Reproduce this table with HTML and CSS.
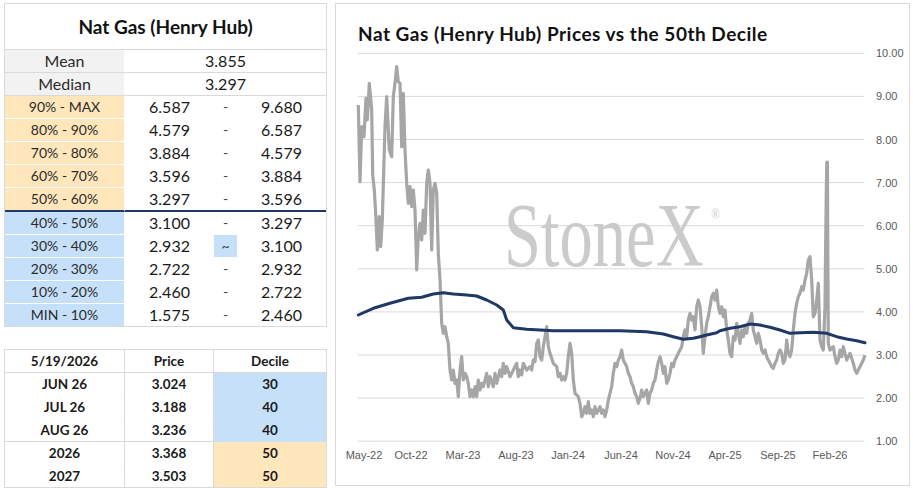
FILE: index.html
```html
<!DOCTYPE html>
<html>
<head>
<meta charset="utf-8">
<link rel="stylesheet" href="styles.css">
</head>
<body>
<div class="page">
  <div class="left">
    <table class="stats">
      <colgroup><col class="c-lab"><col class="c-lo"><col class="c-dash"><col class="c-hi"></colgroup>
      <tr><td class="title" colspan="4">Nat Gas (Henry Hub)</td></tr>
      <tr class="sum"><td class="lab gray">Mean</td><td colspan="3">3.855</td></tr>
      <tr class="sum"><td class="lab gray">Median</td><td colspan="3">3.297</td></tr>
      <tr><td class="lab org">90% - MAX</td><td>6.587</td><td class="dash">-</td><td>9.680</td></tr>
      <tr><td class="lab org">80% - 90%</td><td>4.579</td><td class="dash">-</td><td>6.587</td></tr>
      <tr><td class="lab org">70% - 80%</td><td>3.884</td><td class="dash">-</td><td>4.579</td></tr>
      <tr><td class="lab org">60% - 70%</td><td>3.596</td><td class="dash">-</td><td>3.884</td></tr>
      <tr class="mid"><td class="lab org">50% - 60%</td><td>3.297</td><td class="dash">-</td><td>3.596</td></tr>
      <tr><td class="lab blu">40% - 50%</td><td>3.100</td><td class="dash">-</td><td>3.297</td></tr>
      <tr><td class="lab blu">30% - 40%</td><td>2.932</td><td class="dash cur">~</td><td>3.100</td></tr>
      <tr><td class="lab blu">20% - 30%</td><td>2.722</td><td class="dash">-</td><td>2.932</td></tr>
      <tr><td class="lab blu">10% - 20%</td><td>2.460</td><td class="dash">-</td><td>2.722</td></tr>
      <tr class="last"><td class="lab blu">MIN - 10%</td><td>1.575</td><td class="dash">-</td><td>2.460</td></tr>
    </table>

    <table class="fut">
      <colgroup><col class="f1"><col class="f2"><col class="f3"></colgroup>
      <tr class="head"><td>5/19/2026</td><td>Price</td><td>Decile</td></tr>
      <tr><td>JUN 26</td><td>3.024</td><td class="d blu">30</td></tr>
      <tr><td>JUL 26</td><td>3.188</td><td class="d blu">40</td></tr>
      <tr class="sep"><td>AUG 26</td><td>3.236</td><td class="d blu">40</td></tr>
      <tr><td>2026</td><td>3.368</td><td class="d org">50</td></tr>
      <tr><td>2027</td><td>3.503</td><td class="d org">50</td></tr>
    </table>
  </div>

  <div class="chart">
    <div class="chart-title">Nat Gas (Henry Hub) Prices vs the 50th Decile</div>
    <svg class="plot" width="573" height="440" viewBox="0 0 573 440">
      <g transform="translate(-336,-44)">
        <g class="grid">
          <line x1="358" x2="864" y1="53.3" y2="53.3"/>
          <line x1="358" x2="864" y1="96.4" y2="96.4"/>
          <line x1="358" x2="864" y1="139.5" y2="139.5"/>
          <line x1="358" x2="864" y1="182.6" y2="182.6"/>
          <line x1="358" x2="864" y1="225.7" y2="225.7"/>
          <line x1="358" x2="864" y1="268.8" y2="268.8"/>
          <line x1="358" x2="864" y1="311.9" y2="311.9"/>
          <line x1="358" x2="864" y1="355" y2="355"/>
          <line x1="358" x2="864" y1="398.1" y2="398.1"/>
          <line x1="358" x2="864" y1="441.2" y2="441.2"/>
        </g>
        <g class="ylab">
          <text x="876" y="57.3">10.00</text>
          <text x="876" y="100.4">9.00</text>
          <text x="876" y="143.5">8.00</text>
          <text x="876" y="186.6">7.00</text>
          <text x="876" y="229.7">6.00</text>
          <text x="876" y="272.8">5.00</text>
          <text x="876" y="315.9">4.00</text>
          <text x="876" y="359">3.00</text>
          <text x="876" y="402.1">2.00</text>
          <text x="876" y="445.2">1.00</text>
        </g>
        <g class="xlab">
          <text x="364" y="459">May-22</text>
          <text x="411" y="459">Oct-22</text>
          <text x="463" y="459">Mar-23</text>
          <text x="516" y="459">Aug-23</text>
          <text x="568" y="459">Jan-24</text>
          <text x="621" y="459">Jun-24</text>
          <text x="673" y="459">Nov-24</text>
          <text x="725" y="459">Apr-25</text>
          <text x="778" y="459">Sep-25</text>
          <text x="830" y="459">Feb-26</text>
        </g>
        <text class="mark" transform="translate(504,266) scale(0.74,1)">StoneX<tspan class="reg" dx="10" dy="-47">®</tspan></text>
        <polyline class="price" points="358.3,105 360,181.7 361.7,126.7 364,136.7 366,98.3 367.3,120 369.3,83.3 371.7,110 372.7,175 374.3,190 375.7,213.3 377.3,250 379.3,216.7 380.7,246.7 382.3,220 385,126.7 386.7,96.7 389.3,150 391.7,156.7 393.3,96.7 395,83.3 396.7,66.7 398.3,81.7 400,83.3 401.7,146.7 403.3,93.3 405,150 406.7,183.3 408.3,203.3 410,186.7 411.7,206.7 413.3,190 415,210 416.7,270 418.3,236.7 420,223.3 421.7,240 423.3,210 425,233.3 426.7,183.3 428.3,170 430,183.3 431.7,250 433.3,190 435,183.3 436.7,193.3 438.3,253.3 440,280 441.7,323.3 443.3,333.3 445,326.7 446.7,336.7 448.3,343.3 450,370 451.7,380 453.3,370 455,383.3 456.7,380 458.3,396.7 460,370 461.7,356.7 463.3,380 465,373.3 466.7,376.7 468.3,383.3 470,396.7 471.7,390 473.3,396.7 475,386.7 476.7,396.7 478.3,380 480,390 481.7,383.3 483.3,386.7 486.7,373.3 488.3,386.7 490,376.7 493.3,386.7 495,373.3 496.7,383.3 500,370 501.7,376.7 503.3,363.3 505,373.3 506.7,366.7 510,376.7 513.3,370 516.7,363.3 518.3,376.7 520,370 521.7,375 523.3,363.3 526.7,370 530,366.7 531.7,370 533.3,360 535,361.7 536.7,343.3 538.3,340 540,356.7 541.7,360 543.3,346.7 545,336.7 546.7,326.7 548.3,346.7 550,353.3 553.3,363.3 556.7,366.7 558.3,376.7 560,373.3 561.7,380 563.3,376.7 565,380 566.7,373.3 568.3,356.7 570,343.3 571.7,353.3 573.3,380 575,393.3 578.3,396.7 580,403.3 581.7,416.7 583.3,413.3 585,406.7 586.7,413.3 588.3,401.7 590,413.3 591.7,410 593.3,416.7 595,406.7 596.7,413.3 600,406.7 601.7,413.3 603.3,410 605,416.7 606.7,410 608.3,400 610,393.3 611.7,386.7 613.3,373.3 615,363.3 616.7,366.7 618.3,360 620,356.7 621.7,350 623.3,360 625,363.3 626.7,366.7 628.3,373.3 630,376.7 631.7,383.3 633.3,386.7 635,393.3 636.7,396.7 638.3,403.3 640,398.3 641.7,390 643.3,396.7 645,393.3 646.7,390 648.3,403.3 650,393.3 651.7,390 653.3,383.3 655,380 656.7,370 658.3,361.7 660,356.7 661.7,363.3 663.3,373.3 665,366.7 666.7,383.3 668.3,380 670,373.3 671.7,363.3 673.3,366.7 675,360 676.7,356.7 678.3,353.3 680,350 681.7,346.7 683.3,336.7 685,330 686.7,336.7 688.3,320 690,313.3 691.7,320 693.3,316.7 695,330 696.7,306.7 698.3,300 700,306.7 701.7,326.7 703.3,353.3 705,336.7 706.7,323.3 708.3,316.7 710,306.7 711.7,296.7 713.3,293.3 715,300 716.7,290 718.3,306.7 720,313.3 721.7,306.7 723.3,316.7 725,310 726.7,330 728.3,340 730,353.3 731.7,356.7 733.3,336.7 735,340 736.7,323.3 738.3,333.3 740,343.3 741.7,330 743.3,336.7 745,326.7 746.7,333.3 748.3,323.3 750,320 751.7,313.3 753.3,330 755,336.7 756.7,343.3 758.3,333.3 760,340 761.7,350 763.3,353.3 765,350 766.7,356.7 768.3,360 770,363.3 771.7,366.7 773.3,368.3 775,363.3 776.7,360 778.3,353.3 780,350 781.7,353.3 783.3,363.3 785,360 786.7,340 788.3,353.3 790,356.7 791.7,350 793.3,330 795,313.3 796.7,303.3 798.3,296.7 800,293.3 801.7,286.7 803.3,290 805,280 806.7,273.3 808.3,260 810,256.7 811.7,280 813.3,316.7 815,313.3 816.7,300 818.3,283.3 820,340 821.7,346.7 823.3,350 825,306.7 825.6,250 826.2,200 826.8,162 827.4,162 827.8,250 828.3,343.3 830,350 833.3,346.7 835,356.7 836.7,363.3 838.3,360 840,350 841.7,356.7 843.3,346.7 846.7,360 850,353.3 853.3,363.3 855,370 856.7,373.3 858.3,370 860,366.7 861.7,363.3 863.3,360 865,355"/>
        <polyline class="median" points="358.3,315 373.3,308.3 390,303.3 408.3,298.3 421.7,297.3 433.3,294 443.3,292.7 453.3,294 466.7,295 476.7,296 486.7,300 496.7,305 503.3,310 506.7,320 513.3,327.7 526.7,329.3 540,330 553.3,330.7 586.7,330.7 620,330.7 646.7,331.7 663.3,334 673.3,336.7 683.3,339.3 693.3,338.3 700,336.7 706.7,335 716.7,332.7 720,330.7 730,328.3 740,326.7 750,324 760,325 770,327.3 780,330 790,333.3 800,332.7 813.3,332.3 826.7,333.3 836.7,336.7 846.7,339 856.7,340.7 865,342.7"/>
      </g>
    </svg>
  </div>
</div>
</body>
</html>
```
FILE: styles.css
```css
html, body {
  margin: 0;
  padding: 0;
  background: #ffffff;
}

body {
  width: 913px;
  height: 488px;
  overflow: hidden;
  font-family: "Lato", "Liberation Sans", sans-serif;
  color: #1a1a1a;
}

.page {
  display: flex;
  gap: 8px;
  padding: 3px 0 0 4px;
}

.left {
  width: 323px;
  display: flex;
  flex-direction: column;
  gap: 22px;
}

/* ---------- decile stats table ---------- */
.stats {
  width: 323px;
  table-layout: fixed;
  border-collapse: separate;
  border-spacing: 0;
  border: 1px solid #d9d9d9;
}

.c-lab { width: 120px; }
.c-lo { width: 89px; }
.c-dash { width: 23px; }
.c-hi { width: 89px; }

.stats td {
  height: 22px;
  padding: 0;
  text-align: center;
  font-size: 16px;
  line-height: 22px;
  color: #1a1a1a;
  border-bottom: 1px solid #ffffff;
}

.stats td.title {
  height: 45px;
  font-size: 19px;
  font-weight: 700;
  color: #111;
  border-bottom: 1px solid #d9d9d9;
}

.stats .lab {
  font-size: 14px;
  color: #2b2b2b;
  border-right: 1px solid #ffffff;
}

.stats .sum td {
  border-bottom: 1px solid #d9d9d9;
  font-size: 16px;
}

.stats .sum td.lab {
  font-size: 16px;
}

.stats .gray { background: #f2f2f2; }
.org { background: #ffe6bb; }
.blu { background: #c6e0fa; }

.stats .dash {
  font-size: 14px;
  color: #444;
}

.stats td.cur {
  background: #c6e0fa;
}

.stats .mid td {
  border-bottom: 2px solid #1f3864;
}

.stats .last td {
  border-bottom: none;
}

/* ---------- futures table ---------- */
.fut {
  width: 323px;
  table-layout: fixed;
  border-collapse: separate;
  border-spacing: 0;
  border: 1px solid #d9d9d9;
}

.f1 { width: 120px; }
.f2 { width: 89px; }
.f3 { width: 112px; }

.fut td {
  height: 22px;
  padding: 0;
  text-align: center;
  font-size: 13.5px;
  font-weight: 700;
  line-height: 22px;
  color: #1a1a1a;
  border-bottom: 1px solid transparent;
}

.fut td:nth-child(1),
.fut td:nth-child(2) {
  border-right: 1px solid #d9d9d9;
}

.fut .head td {
  border-bottom: 1px solid #d9d9d9;
}

.fut .sep td {
  border-bottom: 1px solid #d9d9d9;
}

.fut .sep td.d {
  border-bottom: 1px solid #c6e0fa;
}

.fut tr:last-child td {
  border-bottom: none;
}

/* ---------- chart ---------- */
.chart {
  width: 575px;
  height: 483px;
  box-sizing: border-box;
  border: 1px solid #d9d9d9;
  display: flex;
  flex-direction: column;
}

.chart-title {
  height: 40px;
  box-sizing: border-box;
  padding: 20px 0 0 22px;
  font-size: 19px;
  letter-spacing: 0.5px;
  line-height: 20px;
  font-weight: 700;
  color: #111;
}

.plot {
  display: block;
}

.grid line {
  stroke: #d9d9d9;
  stroke-width: 1;
}

.ylab text,
.xlab text {
  font-family: "Liberation Sans", sans-serif;
  font-size: 11px;
  fill: #595959;
}

.xlab text {
  text-anchor: middle;
}

.mark {
  font-family: "Liberation Serif", serif;
  font-size: 90px;
  fill: #cbcbcb;
}

.reg {
  font-size: 15px;
}

.price {
  fill: none;
  stroke: #a6a6a6;
  stroke-width: 3.2;
  stroke-linejoin: round;
}

.median {
  fill: none;
  stroke: #1f3864;
  stroke-width: 3;
  stroke-linejoin: round;
  stroke-linecap: round;
}
```
